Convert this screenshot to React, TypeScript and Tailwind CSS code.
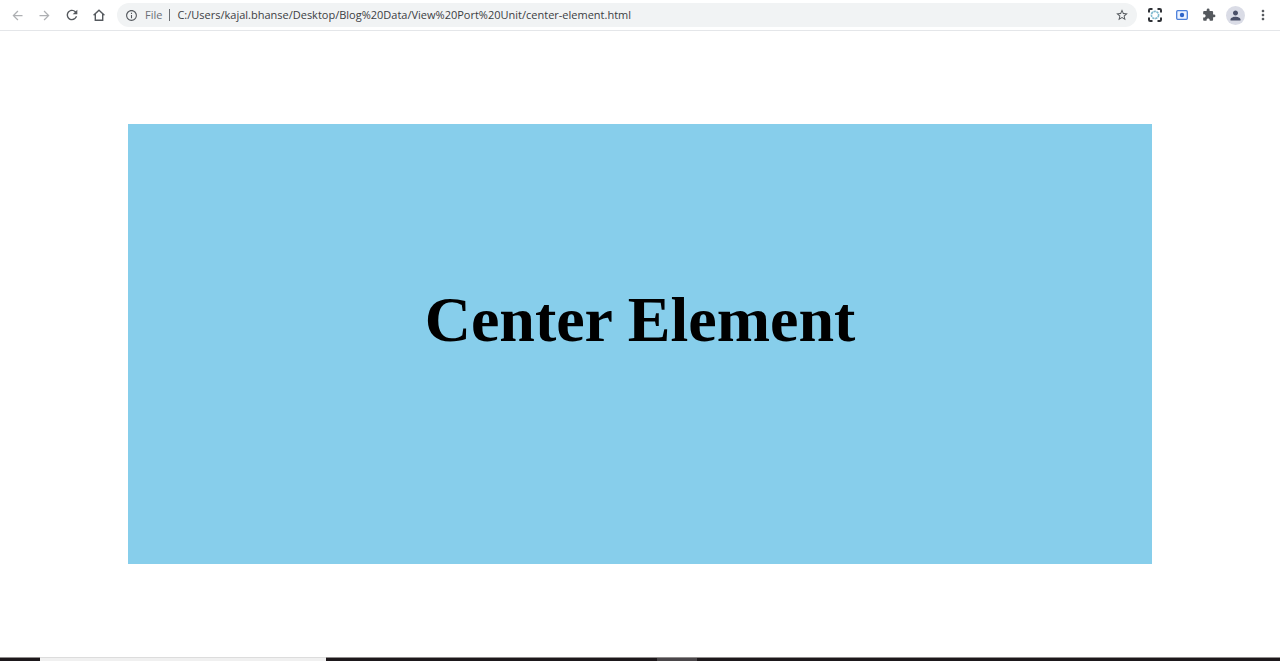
import type { ReactNode } from "react";
import {
  MdArrowBack,
  MdArrowForward,
  MdExtension,
  MdInfoOutline,
  MdMoreVert,
  MdPerson,
  MdRefresh,
  MdStarBorder,
} from "react-icons/md";

type ToolButtonProps = {
  label: string;
  disabled?: boolean;
  children: ReactNode;
};

function ToolButton({ label, disabled, children }: ToolButtonProps) {
  return (
    <button
      type="button"
      aria-label={label}
      disabled={disabled}
      className="flex h-6 w-[27px] shrink-0 items-center justify-center text-[#55595e] disabled:text-[#aeb0b3]"
    >
      {children}
    </button>
  );
}

function HomeIcon() {
  return (
    <svg width="12" height="12" viewBox="0 0 12 12" fill="none" stroke="currentColor" strokeWidth="1.4">
      <path d="M0.6 6.3 6 1.3l5.4 5" />
      <path d="M2.3 5v6.2h7.4V5" />
    </svg>
  );
}

function CaptureIcon() {
  return (
    <svg width="14" height="14" viewBox="0 0 14 14" fill="none">
      <circle cx="7" cy="7" r="3.6" stroke="#7fb9ce" strokeWidth="1.6" strokeDasharray="2.4 0.6" />
      <path
        d="M1 4.5V2.2Q1 1 2.2 1H4.5M9.5 1h2.3Q13 1 13 2.2V4.5M13 9.5v2.3Q13 13 11.8 13H9.5M4.5 13H2.2Q1 13 1 11.8V9.5"
        stroke="#2f3237"
        strokeWidth="2"
      />
    </svg>
  );
}

function RecorderIcon() {
  return (
    <svg width="12" height="10" viewBox="0 0 12 10" fill="none">
      <rect x="0.7" y="0.7" width="10.6" height="8.6" rx="1" fill="#eef4ff" stroke="#4a7fdb" strokeWidth="1.3" />
      <circle cx="6" cy="5" r="2.2" fill="#2f66c9" />
    </svg>
  );
}

function Toolbar() {
  return (
    <header className="flex h-[31px] items-center border-b border-[#e4e6e9] bg-white px-1">
      <nav className="flex" aria-label="Navigation">
        <ToolButton label="Back" disabled>
          <MdArrowBack size={15} />
        </ToolButton>
        <ToolButton label="Forward" disabled>
          <MdArrowForward size={15} />
        </ToolButton>
        <ToolButton label="Reload">
          <MdRefresh size={16} />
        </ToolButton>
        <ToolButton label="Home">
          <HomeIcon />
        </ToolButton>
      </nav>

      <div className="mr-1 ml-[5px] flex h-6 min-w-0 flex-1 items-center rounded-full bg-[#f1f3f4] pr-[2px] pl-2 font-['Open_Sans',sans-serif] text-[11px]">
        <MdInfoOutline size={13} className="shrink-0 text-[#55595e]" />
        <label htmlFor="address" className="ml-[7px] text-[#6b6f74]">
          File
        </label>
        <span className="mx-[7px] h-3 w-px bg-[#6b6f74]" />
        <input
          id="address"
          type="text"
          defaultValue="C:/Users/kajal.bhanse/Desktop/Blog%20Data/View%20Port%20Unit/center-element.html"
          className="min-w-0 flex-1 bg-transparent text-[#3c4043] outline-none"
        />
        <ToolButton label="Bookmark this page">
          <MdStarBorder size={14} />
        </ToolButton>
      </div>

      <div className="flex">
        <ToolButton label="Capture">
          <CaptureIcon />
        </ToolButton>
        <ToolButton label="Recorder">
          <RecorderIcon />
        </ToolButton>
        <ToolButton label="Extensions">
          <MdExtension size={14} />
        </ToolButton>
        <ToolButton label="Profile">
          <span className="flex size-[19px] items-center justify-center rounded-full bg-[#dadce6]">
            <MdPerson size={15} className="text-[#4a5068]" />
          </span>
        </ToolButton>
        <ToolButton label="Menu">
          <MdMoreVert size={16} />
        </ToolButton>
      </div>
    </header>
  );
}

function Taskbar() {
  return (
    <footer className="flex h-1 border-t border-[#8f8c8c] bg-[#1d181b]">
      <div className="w-10" />
      <div className="-mt-px w-[286px] border-t border-[#dcdcdc] bg-[#f0f0f0]" />
      <div className="ml-[331px] w-10 bg-[#4b474a]" />
    </footer>
  );
}

export default function App() {
  return (
    <div className="flex h-screen flex-col bg-white">
      <Toolbar />
      <main className="flex flex-1 items-center justify-center">
        <div className="flex h-[440px] w-4/5 items-center justify-center bg-[#87ceeb] pb-12">
          <h1 className="font-['Liberation_Serif',serif] text-[64px] font-bold text-black">
            Center Element
          </h1>
        </div>
      </main>
      <Taskbar />
    </div>
  );
}
